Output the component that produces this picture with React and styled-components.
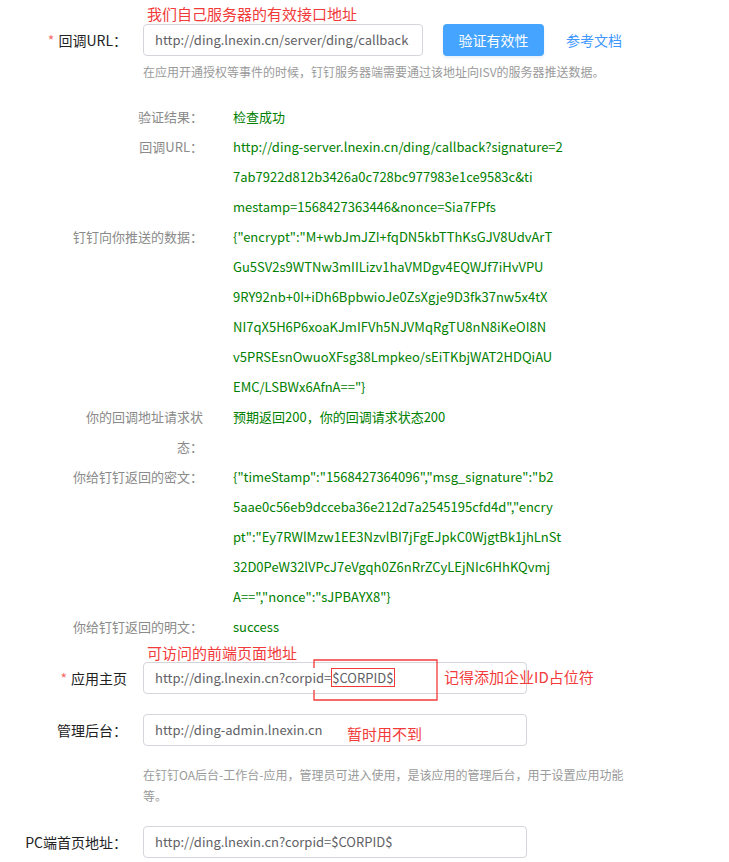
import styled, { createGlobalStyle } from "styled-components";

const GlobalStyle = createGlobalStyle`
  body {
    margin: 0;
    background: #fff;
    font-family: "Noto Sans CJK SC", "Noto Sans", sans-serif;
  }
`;

const callbackLines = [
  "http://ding-server.lnexin.cn/ding/callback?signature=2",
  "7ab7922d812b3426a0c728bc977983e1ce9583c&ti",
  "mestamp=1568427363446&nonce=Sia7FPfs",
];

const pushLines = [
  '{"encrypt":"M+wbJmJZI+fqDN5kbTThKsGJV8UdvArT',
  "Gu5SV2s9WTNw3mIILizv1haVMDgv4EQWJf7iHvVPU",
  "9RY92nb+0I+iDh6BpbwioJe0ZsXgje9D3fk37nw5x4tX",
  "NI7qX5H6P6xoaKJmIFVh5NJVMqRgTU8nN8iKeOI8N",
  "v5PRSEsnOwuoXFsg38Lmpkeo/sEiTKbjWAT2HDQiAU",
  'EMC/LSBWx6AfnA=="}',
];

const cipherLines = [
  '{"timeStamp":"1568427364096","msg_signature":"b2',
  '5aae0c56eb9dcceba36e212d7a2545195cfd4d","encry',
  'pt":"Ey7RWlMzw1EE3NzvlBI7jFgEJpkC0WjgtBk1jhLnSt',
  "32D0PeW32lVPcJ7eVgqh0Z6nRrZCyLEjNIc6HhKQvmj",
  'A==","nonce":"sJPBAYX8"}',
];

const results = [
  { label: "验证结果：", lines: ["检查成功"] },
  { label: "回调URL：", lines: callbackLines },
  { label: "钉钉向你推送的数据：", lines: pushLines },
  { label: "你的回调地址请求状态：", lines: ["预期返回200，你的回调请求状态200"] },
  { label: "你给钉钉返回的密文：", lines: cipherLines },
  { label: "你给钉钉返回的明文：", lines: ["success"] },
];

// 回调配置页面
function App() {
  return (
    <>
      <GlobalStyle />
      <Page>
        <FormItem>
          <FormLabel>
            <Star>*</Star>回调URL：
          </FormLabel>
          <FieldBody>
            <FieldLine>
              <InputBox $width={280}>
                <Note $left={3} $top={-21}>我们自己服务器的有效接口地址</Note>
                http://ding.lnexin.cn/server/ding/callback
              </InputBox>
              <VerifyButton>验证有效性</VerifyButton>
              <DocLink>参考文档</DocLink>
            </FieldLine>
            <Help>在应用开通授权等事件的时候，钉钉服务器端需要通过该地址向ISV的服务器推送数据。</Help>
          </FieldBody>
        </FormItem>

        <ResultList>
          {results.map((r) => (
            <ResultRow key={r.label}>
              <ResultLabel>{r.label}</ResultLabel>
              <ResultValue>
                {r.lines.map((l, i) => (
                  <ValueLine key={i}>{l}</ValueLine>
                ))}
              </ResultValue>
            </ResultRow>
          ))}
        </ResultList>

        <FormItem $top={20}>
          <FormLabel>
            <Star>*</Star>应用主页
          </FormLabel>
          <FieldBody>
            <InputBox $width={384}>
              <Note $left={3} $top={-20}>可访问的前端页面地址</Note>
              http://ding.lnexin.cn?corpid=
              <Mark>
                $CORPID$
                <MarkFrame width="126" height="42" viewBox="0 0 126 42">
                  <path
                    d="M1 9 V1 H124 V41 H1 V31"
                    fill="none"
                    stroke="#f23a3a"
                    strokeWidth="1.3"
                  />
                </MarkFrame>
              </Mark>
              <Note $left={300} $top={4}>记得添加企业ID占位符</Note>
            </InputBox>
          </FieldBody>
        </FormItem>

        <FormItem $top={20}>
          <FormLabel>管理后台：</FormLabel>
          <FieldBody>
            <InputBox $width={384}>
              http://ding-admin.lnexin.cn
              <Note $left={203} $top={9}>暂时用不到</Note>
            </InputBox>
            <Help $top={18} $width={490} $lh={21}>
              在钉钉OA后台-工作台-应用，管理员可进入使用，是该应用的管理后台，用于设置应用功能等。
            </Help>
          </FieldBody>
        </FormItem>

        <FormItem $top={20}>
          <FormLabel>PC端首页地址：</FormLabel>
          <FieldBody>
            <InputBox $width={384}>http://ding.lnexin.cn?corpid=$CORPID$</InputBox>
          </FieldBody>
        </FormItem>
      </Page>
    </>
  );
}

const Page = styled.div`
  padding-top: 24px;
  width: 729px;
  height: 862px;
  box-sizing: border-box;
  overflow: hidden;
`;

const FormItem = styled.div`
  display: flex;
  align-items: flex-start;
  margin-top: ${(p) => p.$top || 0}px;
`;

const FormLabel = styled.label`
  width: 127px;
  flex-shrink: 0;
  padding-right: 16px;
  text-align: right;
  font-size: 14px;
  line-height: 32px;
  color: #222;
  white-space: nowrap;
`;

const Star = styled.span`
  color: #f56c6c;
  margin-right: 4px;
`;

const FieldBody = styled.div`
  display: flex;
  flex-direction: column;
`;

const FieldLine = styled.div`
  display: flex;
  align-items: center;
`;

const InputBox = styled.div`
  position: relative;
  width: ${(p) => p.$width}px;
  height: 32px;
  box-sizing: border-box;
  padding: 0 11px;
  border: 1px solid #d4d6dc;
  border-radius: 4px;
  font-size: 13px;
  line-height: 30px;
  color: #5f6166;
  white-space: nowrap;
`;

const VerifyButton = styled.button`
  margin-left: 20px;
  width: 101px;
  height: 32px;
  border: none;
  border-radius: 4px;
  background: #44a4ff;
  color: #fff;
  font-family: inherit;
  font-size: 14px;
  box-shadow: 0 2px 3px rgba(60, 120, 200, 0.12);
`;

const DocLink = styled.a`
  margin-left: 22px;
  font-size: 14px;
  color: #3d97ff;
  cursor: pointer;
`;

const Help = styled.div`
  margin-top: ${(p) => (p.$top != null ? p.$top : 6)}px;
  width: ${(p) => (p.$width ? `${p.$width}px` : "auto")};
  font-size: 12px;
  line-height: ${(p) => p.$lh || 20}px;
  color: #9a9a9a;
`;

const ResultList = styled.div`
  margin-top: 20px;
  padding-left: 67px;
`;

const ResultRow = styled.div`
  display: flex;
  align-items: flex-start;
`;

const ResultLabel = styled.div`
  width: 136px;
  flex-shrink: 0;
  text-align: right;
  font-size: 13px;
  line-height: 30px;
  color: #8a8a8a;
`;

const ResultValue = styled.div`
  margin-left: 30px;
  font-size: 13px;
  line-height: 30px;
  color: green;
`;

const ValueLine = styled.div`
  white-space: nowrap;
`;

const Note = styled.span`
  position: absolute;
  left: ${(p) => p.$left}px;
  top: ${(p) => p.$top}px;
  font-size: 15px;
  line-height: 20px;
  color: #f23a3a;
  white-space: nowrap;
`;

const Mark = styled.span`
  position: relative;
  display: inline-block;
  line-height: 17px;
  border: 1px solid #f23a3a;
  padding: 0 1px 0 0;
`;

const MarkFrame = styled.svg`
  position: absolute;
  left: -19px;
  top: -10px;
`;

export default App;
